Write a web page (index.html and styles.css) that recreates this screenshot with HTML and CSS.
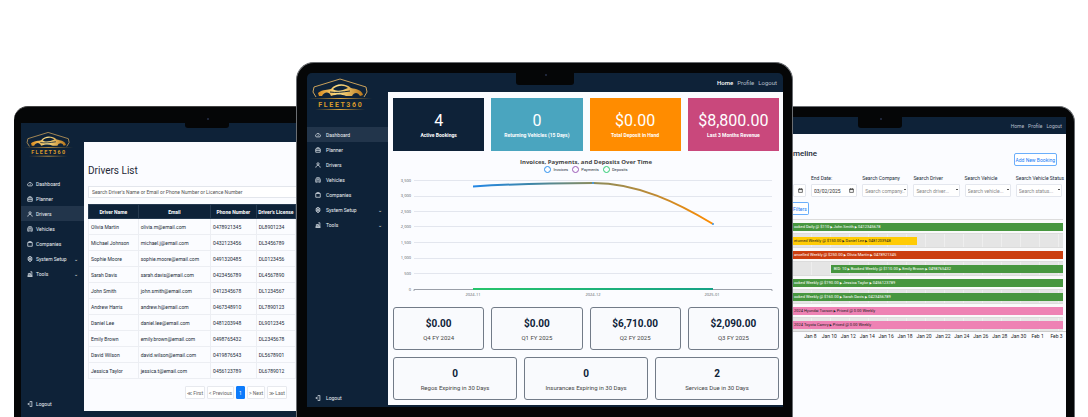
FILE: index.html
```html
<!DOCTYPE html>
<html lang="en">
<head>
<meta charset="utf-8">
<title>Fleet360</title>
<link rel="stylesheet" href="styles.css">
</head>
<body>
<svg class="defs" aria-hidden="true">
  <defs>
    <linearGradient id="gold" x1="0" x2="1"><stop offset="0" stop-color="#d98a1c"/><stop offset=".45" stop-color="#ffe28a"/><stop offset="1" stop-color="#b97518"/></linearGradient>
    <linearGradient id="rule" x1="0" x2="1"><stop offset="0" stop-color="#b8862f" stop-opacity="0"/><stop offset=".5" stop-color="#d9a441"/><stop offset="1" stop-color="#b8862f" stop-opacity="0"/></linearGradient>
    <symbol id="logo" viewBox="0 0 63 33">
      <path d="M7 19 4 14 5 9 31 1 57 9 58 14 55 19" fill="none" stroke="#c9a05a" stroke-width="1"/>
      <path d="M9 15C14 11 19 12 22 11C27 5 36 5 42 10C47 11 53 12 54 17L51 18C49 14 45 14 43 18L37 18C32 16 28 16 22 18C20 13 15 14 13 18L10 18Z" fill="url(#gold)"/>
      <path d="M24 11C29 7 35 7 39 10L34 12C30 13 26 13 24 11Z" fill="#0e2238"/>
      <path d="M21 14C27 15 34 14 41 13" fill="none" stroke="#0e2238" stroke-width="1"/>
      <rect x="0" y="20" width="63" height="1" fill="url(#rule)"/>
      <text x="31" y="29" text-anchor="middle" class="logo-text">F L E E T 3 6 0</text>
      <rect x="6" y="31" width="50" height="1" fill="url(#rule)"/>
    </symbol>
    <symbol id="i-dash" viewBox="0 0 16 16"><path d="M3 13C1 11 1 8 3 7C4 3 12 3 13 7C15 8 15 11 13 13ZM8 10l2-3"/></symbol>
    <symbol id="i-plan" viewBox="0 0 16 16"><path d="M2 5h12v9H2ZM5 5V2h6v3M2 9h12"/></symbol>
    <symbol id="i-driver" viewBox="0 0 16 16"><circle cx="8" cy="5" r="3"/><path d="M2 15C3 11 5 9 8 9s5 2 6 6"/></symbol>
    <symbol id="i-car" viewBox="0 0 16 16"><path d="M2 13V7L4 2h8l2 5v6ZM2 8h12M3 13v2M13 13v2M8 2v6"/></symbol>
    <symbol id="i-bag" viewBox="0 0 16 16"><path d="M2 4h12v10H2ZM5 4V1h6v3"/></symbol>
    <symbol id="i-gear" viewBox="0 0 16 16"><path d="M8 1l5 3v7l-5 4-5-4V4Z"/><circle cx="8" cy="8" r="2"/><path d="M8 1v4M3 4l3 2M13 4l-3 2M3 11l3-2M13 11l-3-2M8 15v-4"/></symbol>
    <symbol id="i-tools" viewBox="0 0 16 16"><path d="M1 14h14M3 11h10v3H3ZM5 11V7l4-1v5M9 2h4v9M2 8l3-1"/></symbol>
    <symbol id="i-out" viewBox="0 0 16 16"><path d="M8 1h5v14H8M8 4V1M8 15v-3M9 8H3M5 5 2 8l3 3"/></symbol>
    <symbol id="i-cal" viewBox="0 0 16 16"><path d="M2 3h12v11H2ZM2 5h12M5 1v3M11 1v3"/></symbol>
  </defs>
</svg>

<main class="stage">
  <section class="device side left">
    <div class="notch"></div>
    <div class="screen">
      <aside class="sidebar">
        <svg class="logo"><use href="#logo"/></svg>
        <nav class="nav">
          <a href="#"><svg><use href="#i-dash"/></svg>Dashboard</a>
          <a href="#"><svg><use href="#i-plan"/></svg>Planner</a>
          <a href="#" class="on"><svg><use href="#i-driver"/></svg>Drivers</a>
          <a href="#"><svg><use href="#i-car"/></svg>Vehicles</a>
          <a href="#"><svg><use href="#i-bag"/></svg>Companies</a>
          <a href="#" class="sub"><svg><use href="#i-gear"/></svg>System Setup</a>
          <a href="#" class="sub"><svg><use href="#i-tools"/></svg>Tools</a>
        </nav>
        <a href="#" class="logout"><svg><use href="#i-out"/></svg>Logout</a>
      </aside>
      <div class="panel drivers">
        <h1>Drivers List</h1>
        <input class="search" type="text" aria-label="Search drivers" placeholder="Search Driver's Name or Email or Phone Number or Licence Number">
        <table>
          <colgroup><col class="c1"><col class="c2"><col class="c3"><col></colgroup>
          <thead><tr><th>Driver Name</th><th>Email</th><th>Phone Number</th><th>Driver's License</th></tr></thead>
          <tbody>
            <tr><td>Olivia Martin</td><td>olivia.m@email.com</td><td>0478921345</td><td>DL8901234</td></tr>
            <tr><td>Michael Johnson</td><td>michael.j@email.com</td><td>0432123456</td><td>DL3456789</td></tr>
            <tr><td>Sophie Moore</td><td>sophie.moore@email.com</td><td>0491320485</td><td>DL0123456</td></tr>
            <tr><td>Sarah Davis</td><td>sarah.davis@email.com</td><td>0423456789</td><td>DL4567890</td></tr>
            <tr><td>John Smith</td><td>john.smith@email.com</td><td>0412345678</td><td>DL1234567</td></tr>
            <tr><td>Andrew Harris</td><td>andrew.h@email.com</td><td>0467348910</td><td>DL7890123</td></tr>
            <tr><td>Daniel Lee</td><td>daniel.lee@email.com</td><td>0481203948</td><td>DL9012345</td></tr>
            <tr><td>Emily Brown</td><td>emily.brown@email.com</td><td>0498765432</td><td>DL2345678</td></tr>
            <tr><td>David Wilson</td><td>david.wilson@email.com</td><td>0419876543</td><td>DL5678901</td></tr>
            <tr><td>Jessica Taylor</td><td>jessica.t@email.com</td><td>0456123789</td><td>DL6789012</td></tr>
          </tbody>
        </table>
        <div class="pager">
          <button>≪ First</button><button>&lt; Previous</button><button class="cur">1</button><button>&gt; Next</button><button>≫ Last</button>
        </div>
      </div>
    </div>
  </section>

  <section class="device centre">
    <div class="notch"></div>
    <div class="screen">
      <aside class="sidebar">
        <svg class="logo"><use href="#logo"/></svg>
        <nav class="nav">
          <a href="#" class="on"><svg><use href="#i-dash"/></svg>Dashboard</a>
          <a href="#"><svg><use href="#i-plan"/></svg>Planner</a>
          <a href="#"><svg><use href="#i-driver"/></svg>Drivers</a>
          <a href="#"><svg><use href="#i-car"/></svg>Vehicles</a>
          <a href="#"><svg><use href="#i-bag"/></svg>Companies</a>
          <a href="#" class="sub"><svg><use href="#i-gear"/></svg>System Setup</a>
          <a href="#" class="sub"><svg><use href="#i-tools"/></svg>Tools</a>
        </nav>
        <a href="#" class="logout"><svg><use href="#i-out"/></svg>Logout</a>
      </aside>
      <div class="main">
        <header class="links"><a href="#" class="here">Home</a><a href="#">Profile</a><a href="#">Logout</a></header>
        <div class="panel dash">
          <div class="tiles">
            <div class="tile navy"><b>4</b><span>Active Bookings</span></div>
            <div class="tile teal"><b>0</b><span>Returning Vehicles (15 Days)</span></div>
            <div class="tile orange"><b>$0.00</b><span>Total Deposit in Hand</span></div>
            <div class="tile pink"><b>$8,800.00</b><span>Last 3 Months Revenue</span></div>
          </div>
          <h2>Invoices, Payments, and Deposits Over Time</h2>
          <div class="legend"><span class="k1">Invoices</span><span class="k2">Payments</span><span class="k3">Deposits</span></div>
          <svg class="chart" viewBox="0 0 386 126" role="img" aria-label="Invoices, payments and deposits by month">
            <defs><linearGradient id="inv" x1="0" x2="1"><stop offset="0" stop-color="#2387e6"/><stop offset=".25" stop-color="#3f86a6"/><stop offset=".5" stop-color="#8b8c5c"/><stop offset=".75" stop-color="#bd8a34"/><stop offset="1" stop-color="#ff8c00"/></linearGradient>
            <linearGradient id="dep" gradientUnits="userSpaceOnUse" x1="80" x2="320" y1="0" y2="0"><stop offset="0" stop-color="#27c46b"/><stop offset="1" stop-color="#16a286"/></linearGradient></defs>
            <path d="M21 7.500H379M21 23.500H379M21 38.500H379M21 53.500H379M21 69.500H379M21 85.500H379M21 100.500H379" stroke="#e3e6ee" fill="none"/>
            <path d="M21 118V116.500H379V118" stroke="#9a9fa8" fill="none"/>
            <g class="ax" text-anchor="end"><text x="18" y="9">3,500</text><text x="18" y="24">3,000</text><text x="18" y="40">2,500</text><text x="18" y="55">2,000</text><text x="18" y="71">1,500</text><text x="18" y="86">1,000</text><text x="18" y="102">500</text><text x="18" y="118">0</text></g>
            <g class="ax" text-anchor="middle"><text x="80" y="123">2024-11</text><text x="200" y="123">2024-12</text><text x="319" y="123">2025-01</text></g>
            <path d="M80 13.500C120 11 160 10 200 10C245 10 285 30 320 51" fill="none" stroke="url(#inv)" stroke-width="2"/>
            <rect x="80" y="115" width="240" height="2" fill="url(#dep)"/>
            <circle cx="200" cy="10" r="1" fill="#3b9bf5"/><circle cx="320" cy="51" r="1" fill="#3b9bf5"/>
          </svg>
          <div class="stats">
            <div class="stat"><b>$0.00</b><span>Q4 FY 2024</span></div>
            <div class="stat"><b>$0.00</b><span>Q1 FY 2025</span></div>
            <div class="stat"><b>$6,710.00</b><span>Q2 FY 2025</span></div>
            <div class="stat"><b>$2,090.00</b><span>Q3 FY 2025</span></div>
          </div>
          <div class="stats">
            <div class="stat"><b>0</b><span>Regos Expiring in 30 Days</span></div>
            <div class="stat"><b>0</b><span>Insurances Expiring in 30 Days</span></div>
            <div class="stat"><b>2</b><span>Services Due in 30 Days</span></div>
          </div>
        </div>
      </div>
    </div>
  </section>

  <section class="device side right">
    <div class="notch"></div>
    <div class="screen">
      <header class="links"><a href="#">Home</a><a href="#">Profile</a><a href="#">Logout</a></header>
      <div class="panel planner">
        <div class="head"><h1>meline</h1><button class="outline">Add New Booking</button></div>
        <div class="filters">
          <div class="stub"><svg><use href="#i-cal"/></svg></div>
          <label>End Date:<span class="date"><input type="text" value="03/02/2025"><svg><use href="#i-cal"/></svg></span></label>
          <label>Search Company<select><option>Search company...</option></select></label>
          <label>Search Driver<select><option>Search driver...</option></select></label>
          <label>Search Vehicle<select><option>Search vehicle...</option></select></label>
          <label>Search Vehicle Status<select><option>Search status...</option></select></label>
        </div>
        <button class="outline cut">Filters</button>
        <div class="gantt">
          <div class="row"><p class="green">ooked Daily @ $110 <i>▶</i> John Smith <i>▶</i> 0412345678</p></div>
          <div class="row"><p class="yellow">eturned Weekly @ $150.00 <i>▶</i> Daniel Lee <i>▶</i> 0481203948</p></div>
          <div class="row"><p class="red">ancelled Weekly @ $250.00 <i>▶</i> Olivia Martin <i>▶</i> 0478921345</p></div>
          <div class="row"><p class="green late">BID: 10 <i>▶</i> Booked Weekly @ $110.00 <i>▶</i> Emily Brown <i>▶</i> 0498765432</p></div>
          <div class="row"><p class="green">ooked Weekly @ $190.00 <i>▶</i> Jessica Taylor <i>▶</i> 0456123789</p></div>
          <div class="row"><p class="green">ooked Weekly @ $160.00 <i>▶</i> Sarah Davis <i>▶</i> 0423456789</p></div>
          <div class="row"><p class="rose">2024 Hyundai Tucson <i>▶</i> Priced @ 0.00 Weekly</p></div>
          <div class="row"><p class="rose">2024 Toyota Camry <i>▶</i> Priced @ 0.00 Weekly</p></div>
        </div>
        <div class="days"><span>Jan 8</span><span>Jan 10</span><span>Jan 12</span><span>Jan 14</span><span>Jan 16</span><span>Jan 18</span><span>Jan 20</span><span>Jan 22</span><span>Jan 24</span><span>Jan 26</span><span>Jan 28</span><span>Jan 30</span><span>Feb 1</span><span>Feb 3</span></div>
      </div>
    </div>
  </section>
</main>
</body>
</html>
```

FILE: styles.css
```css
* { box-sizing: border-box; margin: 0; }
body { background: #fff; color: #222b38; font: 5px/8px Roboto, sans-serif; }
a { color: inherit; text-decoration: none; }
button, input, select { font: inherit; color: inherit; }
.defs { position: absolute; width: 0; height: 0; }

.stage { display: grid; grid-template-columns: 282fr 497fr 282fr; min-height: 100vh; padding: 62px 13px 0 14px; overflow: hidden; }
.device { position: relative; display: flex; background: #050607; min-width: 0; }
.side { margin-top: 44px; }
.screen { flex: 1; display: flex; min-width: 0; background: #0e2238; }
.notch { position: absolute; background: #050607; border-radius: 0 0 3px 3px; }
.notch::after { content: ""; position: absolute; left: 50%; top: 2px; width: 2px; height: 2px; border-radius: 50%; background: #27304a; }

.left { border-radius: 14px 0 0; padding: 16px 0 0 7px; border-top: 1px solid #444; }
.left .notch { left: 171px; top: 9px; width: 44px; height: 12px; }
.centre { z-index: 1; border-radius: 18px 18px 0 0; padding: 10px 9px 11px 10px; border: 1px solid #6b6e72; border-bottom: 0; }
.centre .screen { border-radius: 5px 5px 0 0; }
.centre .notch { left: 50%; margin-left: -29px; top: 9px; width: 58px; height: 13px; }
.right { border-radius: 0 16px 0 0; padding: 10px 8px 0 0; border: solid #6b6e72; border-width: 1px 1px 0 0; }
.right .notch { left: 65px; top: 9px; width: 44px; height: 12px; }
.right .screen { flex-direction: column; }

.sidebar { display: flex; flex-direction: column; color: #eef2f6; flex: none; }
.logo { display: block; }
.logo-text { font: 700 7px Roboto, sans-serif; fill: #d99a2b; }
.nav a, .logout { display: flex; align-items: center; height: 15px; }
.nav svg, .logout svg { width: 6px; height: 6px; fill: none; stroke: #dfe5ec; stroke-width: 2; }
.nav .on { background: #22354b; }
.sub::after { content: "⌄"; margin-left: auto; padding-right: 6px; }
.logout { margin-top: auto; }
.left .sidebar { width: 63px; }
.left .logo { width: 49px; height: 33px; margin: 5px 0 15px 3px; }
.left .nav a, .left .logout { padding-left: 6px; gap: 3px; }
.left .logout { margin-bottom: 7px; }
.centre .sidebar { width: 81px; }
.centre .logo { width: 63px; height: 33px; margin: 5px 0 16px 2px; }
.centre .nav a, .centre .logout { padding-left: 8px; gap: 5px; }
.centre .logout { margin-bottom: 2px; }

.links { display: flex; justify-content: flex-end; align-items: center; gap: 4px; height: 19px; padding-right: 6px; color: #b5bec9; font-size: 6px; }
.links .here { color: #fff; font-weight: 500; }
.right .links { height: 17px; font-size: 5px; padding: 0 4px 0 0; gap: 4px; }
.panel { background: #fbfcff; }

.drivers { flex: 1; min-width: 0; margin: 19px 0 7px; padding: 22px 0 10px 4px; }
.drivers h1 { font-size: 10px; line-height: 14px; font-weight: 400; color: #1f2937; margin-bottom: 8px; }
.search { display: block; width: 100%; height: 12px; padding: 0 3px; border: 1px solid #e3e6ec; border-right: 0; background: #fff; }
.search::placeholder { color: #555; opacity: 1; }
table { width: 100%; margin-top: 6px; border-collapse: collapse; table-layout: fixed; }
.c1 { width: 24%; } .c2 { width: 35%; } .c3 { width: 22%; }
th { height: 14px; padding: 0; background: #0e2238; color: #fff; border: 1px solid #263a50; white-space: nowrap; font-weight: 700; }
td { height: 16px; padding: 0 2px; border: 1px solid #eceef3; }
.pager { display: flex; justify-content: flex-end; gap: 2px; padding: 7px 9px 0 0; }
.pager button { height: 13px; padding: 0 1px; border: 1px solid #e7e9ee; border-radius: 1px; background: #fff; color: #666; }
.pager .cur { padding: 0 2px; background: #0d7bfb; border-color: #0d7bfb; color: #fff; }

.main { flex: 1; min-width: 0; display: flex; flex-direction: column; }
.dash { flex: 1; padding: 6px 4px 5px 5px; margin-bottom: 2px; display: flex; flex-direction: column; }
.tiles, .stats { display: flex; gap: 7px; }
.tiles > *, .stats > * { flex: 1 1 0; display: flex; flex-direction: column; align-items: center; }
.tile { height: 53px; padding-top: 13px; color: #fff; font-weight: 700; }
.tile b { font: 400 16px/20px Roboto, sans-serif; }
.tile span { line-height: 8px; }
.navy { background: #0e2238; } .teal { background: #4aa5bf; } .orange { background: #ff8c00; } .pink { background: #c9487c; }
.dash h2 { text-align: center; font: 700 6px/8px "Open Sans", sans-serif; color: #444; margin-top: 7px; }
.legend { display: flex; justify-content: center; gap: 4px; font-size: 4px; line-height: 5px; }
.legend span { display: flex; align-items: center; gap: 2px; }
.legend span::before { content: ""; width: 5px; height: 5px; border: 1px solid; border-radius: 50%; }
.k1::before { color: #2b90ee; } .k2::before { color: #9b59b6; } .k3::before { color: #2ecc71; }
.chart { display: block; width: 100%; height: auto; margin-bottom: 8px; }
.ax { font: 4px "Open Sans", sans-serif; fill: #555a63; }
.stats + .stats { margin-top: 7px; }
.stat { height: 43px; padding-top: 9px; border: 1px solid #727b88; border-radius: 3px; background: #f9fafd; }
.stat b { font: 700 10px/13px Roboto, sans-serif; color: #0e2238; }
.stat span { font-size: 6px; line-height: 8px; margin-top: 4px; color: #444; }

.planner { flex: 1; padding: 14px 0 0; }
.head { display: flex; justify-content: space-between; padding-right: 9px; }
.head h1 { font-size: 8px; line-height: 12px; font-weight: 500; }
.outline { height: 13px; margin-top: 5px; padding: 0 1px; border: 1px solid #6aaefb; border-radius: 2px; background: #fff; color: #1479f5; }
.filters { display: grid; grid-template-columns: 13px repeat(5, 1fr); gap: 5px; padding: 8px 4px 0 0; align-items: end; }
.filters label { display: block; white-space: nowrap; min-width: 0; }
.filters select, .date, .stub { display: flex; align-items: center; width: 100%; height: 13px; margin-top: 2px; padding: 0 2px; border: 1px solid #e4e7ee; border-radius: 1px; background: #fff; color: #888; }
.filters select { appearance: none; background: #fff linear-gradient(#555, #555) no-repeat right 1px top 4px / 2px 1px; }
.date input { flex: 1; min-width: 0; border: 0; padding: 0; background: none; color: #333; }
.filters svg { width: 5px; height: 5px; flex: none; fill: none; stroke: #222; stroke-width: 2; }
.stub { justify-content: flex-end; }
.cut { display: block; border-left: 0; border-radius: 0 2px 2px 0; padding: 0 1px 0 0; }
.gantt { margin: 4px 3px 0 0; }
.row { height: 14px; padding: 3px 0; border-top: 1px solid #dcdcdc; background: #fafafa; }
.row:nth-child(even) { background: repeating-linear-gradient(90deg, #e5e5e5 0 18px, #eee 18px 19px); }
.row p { height: 8px; font-size: 4px; line-height: 8px; padding-left: 1px; color: #fff; white-space: nowrap; }
.row i { font: 3px "DejaVu Sans", sans-serif; color: inherit; }
.row .green { background: #47963f; } .row .red { background: #cb3f10; }
.row .yellow { background: #ffcb05; color: #222; width: 46%; }
.row .rose { background: #ee82b4; color: #222; }
.row .late { margin-left: 14%; padding-left: 3px; }
.days { display: grid; grid-template-columns: repeat(14, 1fr); padding-left: 8px; text-align: center; white-space: nowrap; border-top: 1px solid #ccc; color: #222; }
```
